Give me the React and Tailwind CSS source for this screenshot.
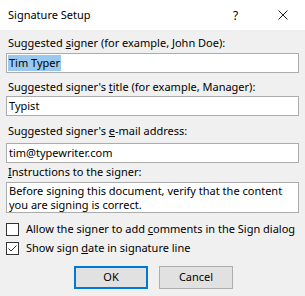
import React from "react";

function Check({ checked }) {
  return (
    <div className="w-[13px] h-[13px] border border-[#333333] bg-white flex items-center justify-center shrink-0">
      {checked && (
        <svg width="11" height="11" viewBox="0 0 11 11">
          <path d="M1.5 5.5 L4 8 L9.5 2.5" fill="none" stroke="#333" strokeWidth="1" />
        </svg>
      )}
    </div>
  );
}

export default function App() {
  return (
    <div
      className="w-[305px] h-[296px] bg-[#f0f0f0] text-[11px] text-black overflow-hidden"
      style={{ fontFamily: '"Noto Sans", "Open Sans", sans-serif' }}
    >
      <div className="h-[30px] bg-white flex items-center pl-[8px] relative">
        <span className="text-[11px]">Signature Setup</span>
        <span className="absolute left-[233px] top-[7px] text-[12px]">?</span>
        <svg className="absolute left-[278px] top-[10px]" width="10" height="10" viewBox="0 0 10 10">
          <path d="M0.5 0.5 L9.5 9.5 M9.5 0.5 L0.5 9.5" stroke="#222" strokeWidth="1" />
        </svg>
      </div>
      <div className="px-[6px]">
        <div className="h-[16px] mt-[5px] pl-[2px] leading-[16px]">
          Suggested <u>s</u>igner (for example, John Doe):
        </div>
        <div className="h-[20px] mt-[2px] border border-[#acacac] bg-white flex items-center pl-[1px]">
          <span className="bg-[#99c9ef] leading-[16px] px-[1px]">Tim Typer</span>
        </div>
        <div className="h-[16px] mt-[6px] pl-[2px] leading-[16px]">
          Suggested signer's <u>t</u>itle (for example, Manager):
        </div>
        <div className="h-[20px] mt-[1px] border border-[#acacac] bg-white flex items-center pl-[2px]">
          Typist
        </div>
        <div className="h-[16px] mt-[7px] pl-[2px] leading-[16px]">
          Suggested signer's <u>e</u>-mail address:
        </div>
        <div className="h-[20px] mt-[4px] border border-[#acacac] bg-white flex items-center pl-[2px]">
          tim@typewriter.com
        </div>
        <div className="h-[16px] mt-[1px] pl-[2px] leading-[16px]">
          <u>I</u>nstructions to the signer:
        </div>
        <div className="h-[31px] mt-[2px] border border-[#acacac] bg-white pl-[2px] leading-[14px] pt-[1px]">
          Before signing this document, verify that the content you are signing is correct.
        </div>
        <div className="flex items-center gap-[7px] mt-[9px] h-[14px]">
          <Check checked={false} />
          <span className="whitespace-nowrap">Allow the signer to add <u>c</u>omments in the Sign dialog</span>
        </div>
        <div className="flex items-center gap-[7px] mt-[5px] h-[14px]">
          <Check checked={true} />
          <span className="whitespace-nowrap">Show sign <u>d</u>ate in signature line</span>
        </div>
        <div className="flex gap-[11px] mt-[11px] pl-[68px]">
          <button className="w-[74px] h-[23px] border-2 border-[#0078d7] bg-[#e1e1e1] flex items-center justify-center">
            OK
          </button>
          <button className="w-[74px] h-[23px] border border-[#adadad] bg-[#e1e1e1] flex items-center justify-center">
            Cancel
          </button>
        </div>
      </div>
    </div>
  );
}
